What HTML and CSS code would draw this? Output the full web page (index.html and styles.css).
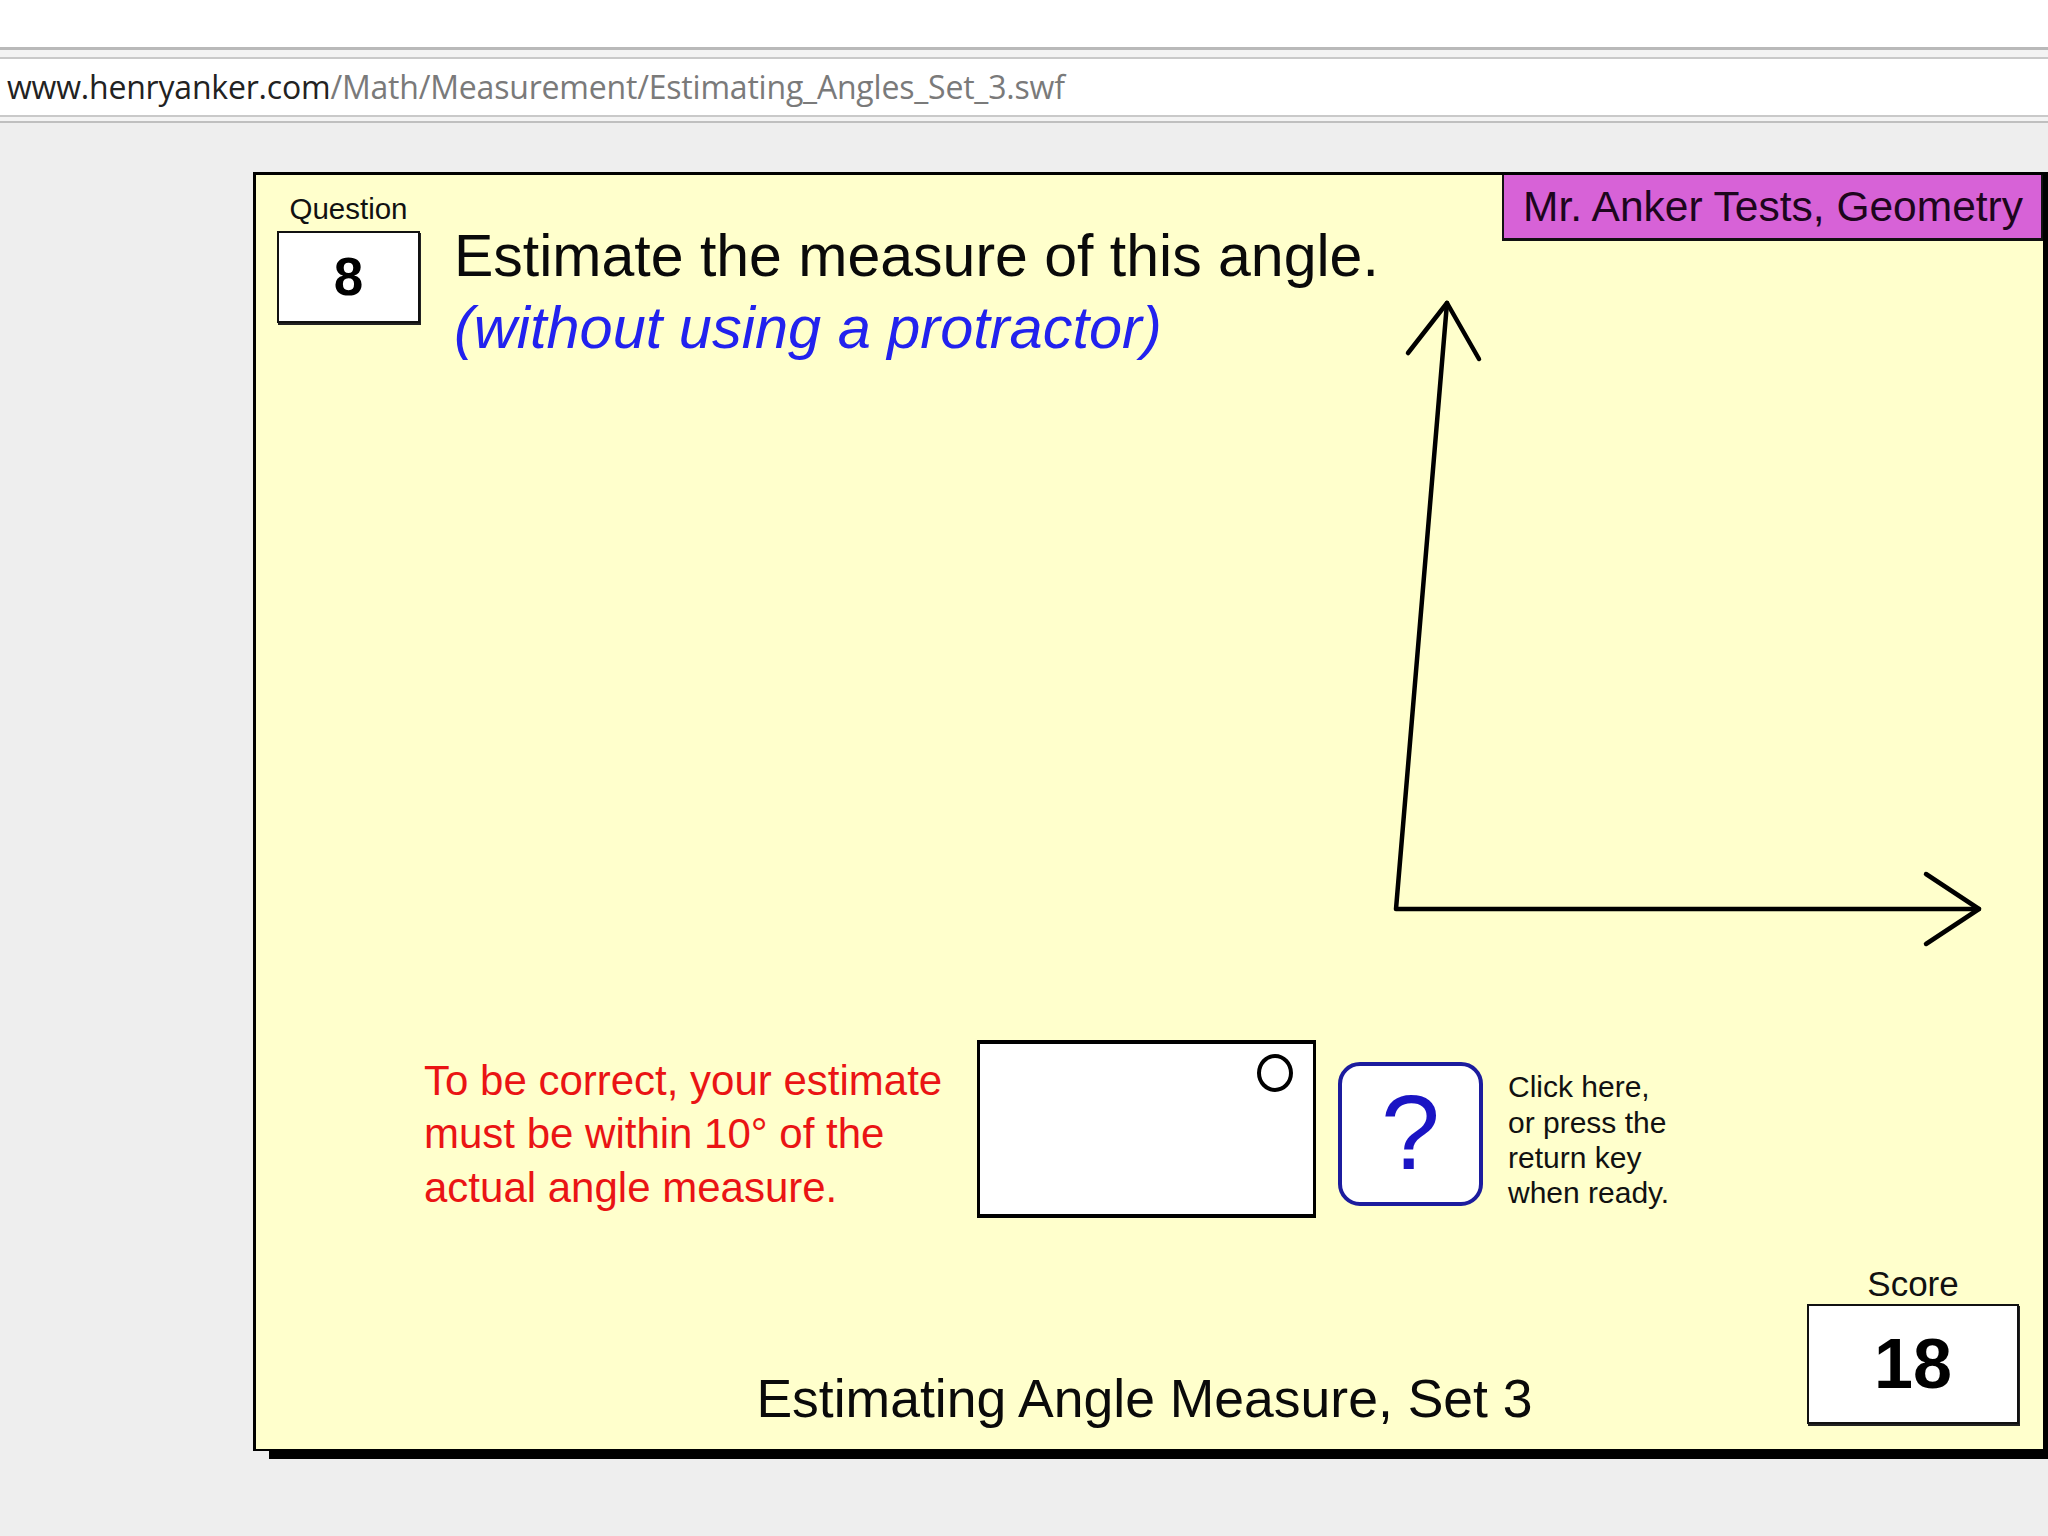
FILE: index.html
```html
<!DOCTYPE html>
<html lang="en">
<head>
<meta charset="utf-8">
<title>Estimating Angles Set 3</title>
<link rel="stylesheet" href="styles.css">
</head>
<body>
<div class="page">
  <div class="chrome">
    <div class="chrome-top"></div>
    <div class="rule rule-a"></div>
    <div class="strip"></div>
    <div class="rule rule-b"></div>
    <div class="address"><span class="host">www.henryanker.com</span><span class="path">/Math/Measurement/Estimating_Angles_Set_3.swf</span></div>
    <div class="rule rule-b"></div>
    <div class="strip strip-b"></div>
    <div class="rule rule-c"></div>
  </div>
  <main class="stage">
    <section class="panel">
      <svg class="angle" viewBox="0 0 1787 1274" preserveAspectRatio="none" aria-hidden="true">
        <g fill="none" stroke="#000" stroke-width="4.5" stroke-linecap="round" stroke-linejoin="round">
          <polyline points="1191,128 1140,734 1723,734"/>
          <polyline points="1152,178 1191,128 1223,184"/>
          <polyline points="1670,699 1723,734 1670,769"/>
        </g>
      </svg>
      <header class="head">
        <div class="qcol">
          <div class="qlabel">Question</div>
          <div class="qbox">8</div>
        </div>
        <div class="prompt">
          <div class="prompt-main">Estimate the measure of this angle.</div>
          <div class="prompt-sub">(without using a protractor)</div>
        </div>
        <div class="badge">Mr. Anker Tests, Geometry</div>
      </header>
      <div class="answer">
        <p class="rule-text">To be correct, your estimate<br>must be within 10° of the<br>actual angle measure.</p>
        <div class="entry"><span class="deg"></span></div>
        <div class="help">?</div>
        <p class="hint">Click here,<br>or press the<br>return key<br>when ready.</p>
      </div>
      <footer class="foot">
        <div class="set-title">Estimating Angle Measure, Set 3</div>
        <div class="score">
          <div class="score-label">Score</div>
          <div class="score-box">18</div>
        </div>
      </footer>
    </section>
  </main>
</div>
</body>
</html>
```

FILE: styles.css
```css
html, body {
  margin: 0;
  padding: 0;
  overflow: hidden;
}

body {
  background: #eeeeee;
  font-family: "Liberation Sans", Arial, sans-serif;
  color: #000;
}

.page {
  width: 2048px;
  height: 1536px;
  overflow: hidden;
}

/* browser chrome */
.chrome-top {
  height: 47px;
  background: #ffffff;
}

.rule-a {
  height: 3px;
  background: #b9b9b9;
}

.strip {
  height: 7px;
  background: #f3f3f3;
}

.strip-b {
  height: 4px;
}

.rule-b {
  height: 2px;
  background: #c9c9c9;
}

.rule-c {
  height: 2px;
  background: #bfbfbf;
}

.address {
  height: 56px;
  line-height: 56px;
  background: #ffffff;
  padding-left: 7px;
  font-family: "Open Sans", "Noto Sans", sans-serif;
  font-size: 32px;
  letter-spacing: -0.2px;
  white-space: nowrap;
}

.host {
  color: #222222;
}

.path {
  color: #7a7a7a;
}

/* stage */
.stage {
  padding: 49px 0 0 253px;
}

.panel {
  position: relative;
  width: 1787px;
  height: 1274px;
  background: #ffffcc;
  border-style: solid;
  border-color: #000;
  border-width: 3px 6px 2px 3px;
  box-shadow: 16px 8px 0 #000;
  display: flex;
  flex-direction: column;
}

.angle {
  position: absolute;
  left: 0;
  top: 0;
  width: 100%;
  height: 100%;
}

/* header */
.head {
  display: flex;
  align-items: flex-start;
  height: 188px;
  padding-left: 21px;
}

.qcol {
  display: flex;
  flex-direction: column;
  align-items: center;
  padding-top: 18px;
  width: 143px;
}

.qlabel {
  font-size: 29.5px;
  line-height: 32px;
  color: #111;
  margin-bottom: 6px;
  white-space: nowrap;
}

.qbox {
  box-sizing: border-box;
  width: 143px;
  height: 92px;
  background: #ffffff;
  border: 2px solid #111;
  box-shadow: 1px 2px 0 #222;
  font-weight: bold;
  font-size: 53px;
  line-height: 88px;
  text-align: center;
}

.prompt {
  margin-left: 34px;
  margin-top: 46px;
  font-size: 59px;
  line-height: 71px;
  white-space: nowrap;
}

.prompt-main {
  color: #0a0a0a;
}

.prompt-sub {
  color: #2222ee;
  font-style: italic;
  font-size: 59.5px;
}

.badge {
  margin-left: auto;
  box-sizing: border-box;
  height: 66px;
  line-height: 64px;
  padding: 0 18px 0 19px;
  background: #d762d7;
  border-style: solid;
  border-color: #111;
  border-width: 0 2px 3px 2px;
  font-size: 42.5px;
  color: #1d061d;
  white-space: nowrap;
}

/* answer row */
.answer {
  display: flex;
  align-items: center;
  height: 178px;
  margin-top: 677px;
  padding-left: 168px;
}

.rule-text {
  margin: 10px 0 0 0;
  width: 553px;
  font-size: 42px;
  line-height: 53.5px;
  color: #ea1414;
  white-space: nowrap;
}

.entry {
  position: relative;
  box-sizing: border-box;
  width: 339px;
  height: 178px;
  background: #ffffff;
  border: 3px solid #000;
  border-width: 4px 3px 4px 3px;
  display: flex;
  justify-content: flex-end;
  align-items: flex-start;
  padding: 10px 20px 0 0;
}

.deg {
  display: block;
  box-sizing: border-box;
  width: 36px;
  height: 38px;
  border: 4px solid #000;
  border-radius: 50%;
}

.help {
  box-sizing: border-box;
  width: 145px;
  height: 144px;
  margin: 10px 0 0 22px;
  background: #ffffff;
  border: 4px solid #1c1c9e;
  border-radius: 22px;
  color: #1a14c4;
  font-size: 106px;
  line-height: 132px;
  text-align: center;
}

.hint {
  margin: 22px 0 0 25px;
  font-size: 30px;
  line-height: 35.3px;
  color: #111;
  white-space: nowrap;
}

/* footer */
.foot {
  display: grid;
  grid-template-columns: 1fr auto 1fr;
  align-items: end;
  margin-top: 48px;
  padding-bottom: 25px;
}

.set-title {
  grid-column: 2;
  font-size: 53.5px;
  line-height: 60px;
  margin: 0 10px -5px 0;
  color: #0a0a0a;
  white-space: nowrap;
}

.score {
  grid-column: 3;
  justify-self: end;
  margin-right: 24px;
  display: flex;
  flex-direction: column;
  align-items: center;
}

.score-label {
  font-size: 35px;
  line-height: 36px;
  color: #111;
  margin-bottom: 2px;
}

.score-box {
  box-sizing: border-box;
  width: 212px;
  height: 120px;
  background: #ffffff;
  border: 2px solid #111;
  box-shadow: 1px 2px 0 #222;
  font-weight: bold;
  font-size: 70px;
  line-height: 116px;
  text-align: center;
}
```
